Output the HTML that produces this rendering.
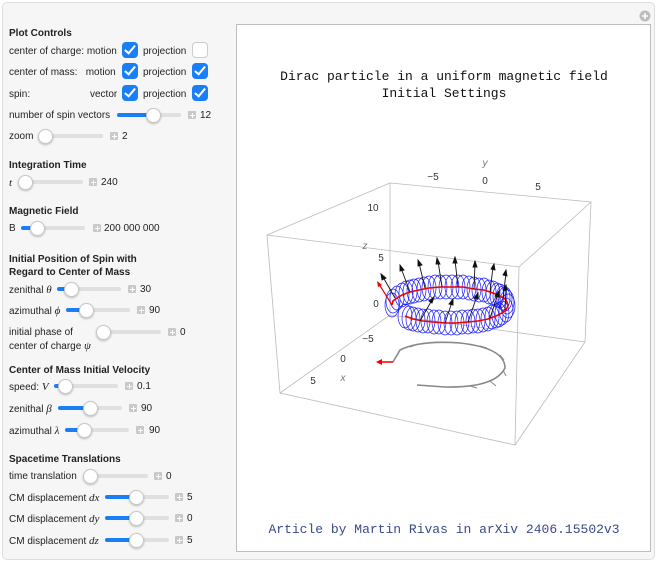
<!DOCTYPE html>
<html><head><meta charset="utf-8"><style>
*{margin:0;padding:0;box-sizing:border-box}
body{width:659px;height:563px;background:#fff;font-family:"Liberation Sans",sans-serif;font-size:10px;color:#222;position:relative;overflow:hidden}
#frame{position:absolute;left:2px;top:2px;width:653px;height:558px;background:#f6f6f6;border:1px solid #dedede;border-radius:5px}
.t{position:absolute;white-space:nowrap;line-height:12px;transform:translateY(1px)}
.b{font-weight:bold}
.cb{position:absolute;width:16px;height:16px;border-radius:4px;background:#1a7ef7}
.cb:after{content:"";position:absolute;left:5px;top:1px;width:4px;height:9px;border:solid #fff;border-width:0 2px 2px 0;transform:rotate(40deg)}
.cb.off{background:#fff;border:1px solid #ccc}
.cb.off:after{display:none}
.tr{position:absolute;height:4px;background:#e0e0e0;border-radius:2px}
.fl{position:absolute;height:4px;background:#1a7ef7;border-radius:2px}
.th{position:absolute;width:15px;height:15px;border-radius:50%;background:#fff;border:1px solid #c8c8c8;box-shadow:0 1px 2px rgba(0,0,0,.25)}
.pl{position:absolute;width:8px;height:8px;background:#c9c9c9;border-radius:1px}
.pl:before{content:"";position:absolute;left:1.5px;top:3.5px;width:5px;height:1px;background:#fff}
.pl:after{content:"";position:absolute;left:3.5px;top:1.5px;width:1px;height:5px;background:#fff}
i{font-family:"Liberation Serif",serif;font-size:11px}
#plot{position:absolute;left:236px;top:24px;width:415px;height:528px;background:#fff;border:1px solid #bdbdbd}
</style></head><body>
<div id="frame"></div>
<div class="t b" style="left:9px;top:27px">Plot Controls</div>
<div class="t" style="left:9px;top:45px">center of charge: motion</div>
<div class="cb" style="left:122px;top:42px"></div>
<div class="t" style="left:143px;top:45px">projection</div>
<div class="cb off" style="left:192px;top:42px"></div>
<div class="t" style="left:9px;top:66px">center of mass:&nbsp;&nbsp;&nbsp;motion</div>
<div class="cb" style="left:122px;top:63px"></div>
<div class="t" style="left:143px;top:66px">projection</div>
<div class="cb" style="left:192px;top:63px"></div>
<div class="t" style="left:9px;top:88px">spin:</div>
<div class="t" style="left:90px;top:88px">vector</div>
<div class="cb" style="left:122px;top:85px"></div>
<div class="t" style="left:143px;top:88px">projection</div>
<div class="cb" style="left:192px;top:85px"></div>

<div class="t" style="left:9px;top:109px">number of spin vectors</div>
<div class="tr" style="left:117px;top:113px;width:64px"></div><div class="fl" style="left:117px;top:113px;width:36px"></div><div class="th" style="left:146px;top:108px"></div>
<div class="pl" style="left:188px;top:111px"></div><div class="t" style="left:200px;top:109px">12</div>

<div class="t" style="left:9px;top:130px">zoom</div>
<div class="tr" style="left:40px;top:134px;width:63px"></div><div class="th" style="left:38px;top:129px"></div>
<div class="pl" style="left:110px;top:132px"></div><div class="t" style="left:122px;top:130px">2</div>

<div class="t b" style="left:9px;top:159px">Integration Time</div>
<div class="t" style="left:9px;top:176px"><i>t</i></div>
<div class="tr" style="left:20px;top:180px;width:63px"></div><div class="th" style="left:18px;top:175px"></div>
<div class="pl" style="left:89px;top:178px"></div><div class="t" style="left:101px;top:176px">240</div>

<div class="t b" style="left:9px;top:205px">Magnetic Field</div>
<div class="t" style="left:9px;top:222px">B</div>
<div class="tr" style="left:21px;top:226px;width:64px"></div><div class="fl" style="left:21px;top:226px;width:16px"></div><div class="th" style="left:30px;top:221px"></div>
<div class="pl" style="left:93px;top:224px"></div><div class="t" style="left:104px;top:222px">200 000 000</div>

<div class="t b" style="left:9px;top:253px">Initial Position of Spin with</div>
<div class="t b" style="left:9px;top:266px">Regard to Center of Mass</div>
<div class="t" style="left:9px;top:283px">zenithal <i>θ</i></div>
<div class="tr" style="left:57px;top:287px;width:64px"></div><div class="fl" style="left:57px;top:287px;width:14px"></div><div class="th" style="left:64px;top:282px"></div>
<div class="pl" style="left:128px;top:285px"></div><div class="t" style="left:140px;top:283px">30</div>
<div class="t" style="left:9px;top:304px">azimuthal <i>ϕ</i></div>
<div class="tr" style="left:66px;top:308px;width:64px"></div><div class="fl" style="left:66px;top:308px;width:20px"></div><div class="th" style="left:79px;top:303px"></div>
<div class="pl" style="left:137px;top:306px"></div><div class="t" style="left:149px;top:304px">90</div>
<div class="t" style="left:9px;top:326px">initial phase of</div>
<div class="t" style="left:9px;top:339px">center of charge <i>ψ</i></div>
<div class="tr" style="left:97px;top:330px;width:64px"></div><div class="th" style="left:96px;top:325px"></div>
<div class="pl" style="left:168px;top:328px"></div><div class="t" style="left:180px;top:326px">0</div>

<div class="t b" style="left:9px;top:364px">Center of Mass Initial Velocity</div>
<div class="t" style="left:9px;top:380px">speed: <i>V</i></div>
<div class="tr" style="left:54px;top:384px;width:64px"></div><div class="fl" style="left:54px;top:384px;width:10px"></div><div class="th" style="left:58px;top:379px"></div>
<div class="pl" style="left:125px;top:382px"></div><div class="t" style="left:137px;top:380px">0.1</div>
<div class="t" style="left:9px;top:402px">zenithal <i>β</i></div>
<div class="tr" style="left:58px;top:406px;width:64px"></div><div class="fl" style="left:58px;top:406px;width:32px"></div><div class="th" style="left:83px;top:401px"></div>
<div class="pl" style="left:129px;top:404px"></div><div class="t" style="left:141px;top:402px">90</div>
<div class="t" style="left:9px;top:424px">azimuthal <i>λ</i></div>
<div class="tr" style="left:65px;top:428px;width:64px"></div><div class="fl" style="left:65px;top:428px;width:19px"></div><div class="th" style="left:77px;top:423px"></div>
<div class="pl" style="left:136px;top:426px"></div><div class="t" style="left:149px;top:424px">90</div>

<div class="t b" style="left:9px;top:453px">Spacetime Translations</div>
<div class="t" style="left:9px;top:470px">time translation</div>
<div class="tr" style="left:83px;top:474px;width:65px"></div><div class="th" style="left:83px;top:469px"></div>
<div class="pl" style="left:154px;top:472px"></div><div class="t" style="left:166px;top:470px">0</div>
<div class="t" style="left:9px;top:491px">CM displacement <i>dx</i></div>
<div class="tr" style="left:105px;top:495px;width:64px"></div><div class="fl" style="left:105px;top:495px;width:31px"></div><div class="th" style="left:129px;top:490px"></div>
<div class="pl" style="left:175px;top:493px"></div><div class="t" style="left:187px;top:491px">5</div>
<div class="t" style="left:9px;top:512px">CM displacement <i>dy</i></div>
<div class="tr" style="left:105px;top:516px;width:64px"></div><div class="fl" style="left:105px;top:516px;width:31px"></div><div class="th" style="left:129px;top:511px"></div>
<div class="pl" style="left:175px;top:514px"></div><div class="t" style="left:187px;top:512px">0</div>
<div class="t" style="left:9px;top:534px">CM displacement <i>dz</i></div>
<div class="tr" style="left:105px;top:538px;width:64px"></div><div class="fl" style="left:105px;top:538px;width:31px"></div><div class="th" style="left:129px;top:533px"></div>
<div class="pl" style="left:175px;top:536px"></div><div class="t" style="left:187px;top:534px">5</div>

<svg style="position:absolute;left:639px;top:10px" width="12" height="12"><circle cx="6" cy="6" r="5.5" fill="#bdbdbd"/><path d="M3 6H9M6 3V9" stroke="#fff" stroke-width="1.6"/></svg>

<div id="plot"></div>
<svg style="position:absolute;left:0;top:0" width="659" height="563" font-family="Liberation Sans, sans-serif">
<text x="444" y="80" text-anchor="middle" font-family="Liberation Mono, monospace" font-size="13" fill="#111">Dirac particle in a uniform magnetic field</text>
<text x="444" y="97" text-anchor="middle" font-family="Liberation Mono, monospace" font-size="13" fill="#111">Initial Settings</text>
<text x="444" y="533" text-anchor="middle" font-family="Liberation Mono, monospace" font-size="13" fill="#3a4a8a">Article by Martin Rivas in arXiv 2406.15502v3</text>
<g stroke="#bbb" stroke-width="0.8" fill="none">
<path d="M390 183L591 202L585 342L515 445L280 393L267 235L390 183M267 235L519 267L591 202M519 267L515 445M390 183L390 315L585 342M390 315L280 393"/>
</g>
<g font-size="10" fill="#333">
<text x="433" y="180" text-anchor="middle">−5</text><text x="485" y="184" text-anchor="middle">0</text><text x="538" y="190" text-anchor="middle">5</text>
<text x="485" y="166" text-anchor="middle" font-style="italic" fill="#777">y</text>
<text x="373" y="211" text-anchor="middle">10</text><text x="381" y="261" text-anchor="middle">5</text><text x="376" y="307" text-anchor="middle">0</text>
<text x="365" y="249" text-anchor="middle" font-style="italic" fill="#777">z</text>
<text x="368" y="342" text-anchor="middle">−5</text><text x="343" y="362" text-anchor="middle">0</text><text x="313" y="384" text-anchor="middle">5</text>
<text x="343" y="381" text-anchor="middle" font-style="italic" fill="#777">x</text>
</g>
<path d="M393 362 L400 350 Q420 340 460 343 Q505 348 505 368 Q495 388 445 387 L417 385" stroke="#888" stroke-width="1.6" fill="none"/>
<g stroke="#888" stroke-width="1"><path d="M410 347l8-3M430 343l8-1M455 343l8 0M480 346l7 2M500 355l4 5M503 370l3 6M490 381l6 5M470 386l7 2M445 387l8 0"/></g>
<path d="M393 362H378" stroke="#e00" stroke-width="1.5"/><path d="M376 362l6-3v6z" fill="#e00"/>
<g fill="none" stroke="#1a1aff" stroke-width="0.7">
<ellipse cx="392" cy="305" rx="7" ry="12"/><ellipse cx="393" cy="301" rx="7" ry="12"/><ellipse cx="397" cy="298" rx="7" ry="12"/><ellipse cx="402" cy="295" rx="7" ry="12"/><ellipse cx="406" cy="293" rx="7" ry="12"/><ellipse cx="410" cy="292" rx="7" ry="12"/><ellipse cx="414" cy="291" rx="7" ry="12"/><ellipse cx="419" cy="290" rx="7" ry="12"/><ellipse cx="424" cy="289" rx="7" ry="12"/><ellipse cx="429" cy="288" rx="7" ry="12"/><ellipse cx="435" cy="287" rx="7" ry="12"/><ellipse cx="440" cy="287" rx="7" ry="12"/><ellipse cx="446" cy="287" rx="7" ry="12"/><ellipse cx="452" cy="287" rx="7" ry="12"/><ellipse cx="458" cy="287" rx="7" ry="12"/><ellipse cx="463" cy="287" rx="7" ry="12"/><ellipse cx="469" cy="288" rx="7" ry="12"/><ellipse cx="474" cy="289" rx="7" ry="12"/><ellipse cx="479" cy="290" rx="7" ry="12"/><ellipse cx="484" cy="290" rx="7" ry="12"/><ellipse cx="489" cy="292" rx="7" ry="12"/><ellipse cx="493" cy="293" rx="7" ry="12"/><ellipse cx="497" cy="295" rx="7" ry="12"/><ellipse cx="500" cy="296" rx="7" ry="12"/><ellipse cx="503" cy="298" rx="7" ry="12"/><ellipse cx="505" cy="299" rx="7" ry="12"/><ellipse cx="507" cy="302" rx="7" ry="12"/><ellipse cx="508" cy="306" rx="7" ry="12"/><ellipse cx="506" cy="310" rx="7" ry="12"/><ellipse cx="502" cy="313" rx="7" ry="12"/><ellipse cx="499" cy="315" rx="7" ry="12"/><ellipse cx="496" cy="316" rx="7" ry="12"/><ellipse cx="492" cy="317" rx="7" ry="12"/><ellipse cx="488" cy="319" rx="7" ry="12"/><ellipse cx="483" cy="320" rx="7" ry="12"/><ellipse cx="478" cy="321" rx="7" ry="12"/><ellipse cx="473" cy="321" rx="7" ry="12"/><ellipse cx="468" cy="322" rx="7" ry="12"/><ellipse cx="462" cy="322" rx="7" ry="12"/><ellipse cx="457" cy="323" rx="7" ry="12"/><ellipse cx="451" cy="323" rx="7" ry="12"/><ellipse cx="445" cy="323" rx="7" ry="12"/><ellipse cx="439" cy="322" rx="7" ry="12"/><ellipse cx="434" cy="322" rx="7" ry="12"/><ellipse cx="428" cy="321" rx="7" ry="12"/><ellipse cx="423" cy="321" rx="7" ry="12"/><ellipse cx="418" cy="320" rx="7" ry="12"/><ellipse cx="413" cy="319" rx="7" ry="12"/><ellipse cx="409" cy="318" rx="7" ry="12"/><ellipse cx="405" cy="316" rx="7" ry="12"/>
</g>
<polyline fill="none" stroke="#e00" stroke-width="1.6" points="392,305 393,301 397,298 402,295 410,292 419,290 429,288 440,287 452,287 463,287 474,289 484,290 493,293 500,296 505,299 507,302 508,306 506,310 502,313 496,316 488,319 478,321 468,322 456,323 445,323 433,322 423,321 413,319 405,316"/>
<g stroke="#111" stroke-width="0.9" fill="#111">
<path d="M395 298L383 277"/><path d="M381 274l1 6 4-2z"/>
<path d="M410 292L401 268"/><path d="M400 265l0 6 4-1z"/>
<path d="M425 288L419 263"/><path d="M418 260l0 6 4-1z"/>
<path d="M442 287L438 261"/><path d="M437 258l-1 6 4 0z"/>
<path d="M458 287L455 260"/><path d="M455 257l-2 6 4 0z"/>
<path d="M474 289L475 264"/><path d="M475 261l-2 6 4 0z"/>
<path d="M490 292L493 267"/><path d="M494 264l-3 5 4 1z"/>
<path d="M503 298L506 273"/><path d="M506 270l-3 5 4 1z"/>
<path d="M505 310L506 288"/><path d="M506 285l-3 5 4 0z"/>
<path d="M490 318L498 294"/><path d="M499 291l-4 5 4 1z"/>
<path d="M468 322L477 296"/><path d="M478 293l-4 5 4 1z"/>
<path d="M445 323L452 302"/><path d="M453 299l-4 5 4 1z"/>
<path d="M420 321L432 300"/><path d="M434 297l-5 4 3 2z"/>
</g>
<path d="M392 305L379 284" stroke="#e00" stroke-width="1.2"/><path d="M377 281l1 6 4-2z" fill="#e00"/>
</svg>
</body></html>
